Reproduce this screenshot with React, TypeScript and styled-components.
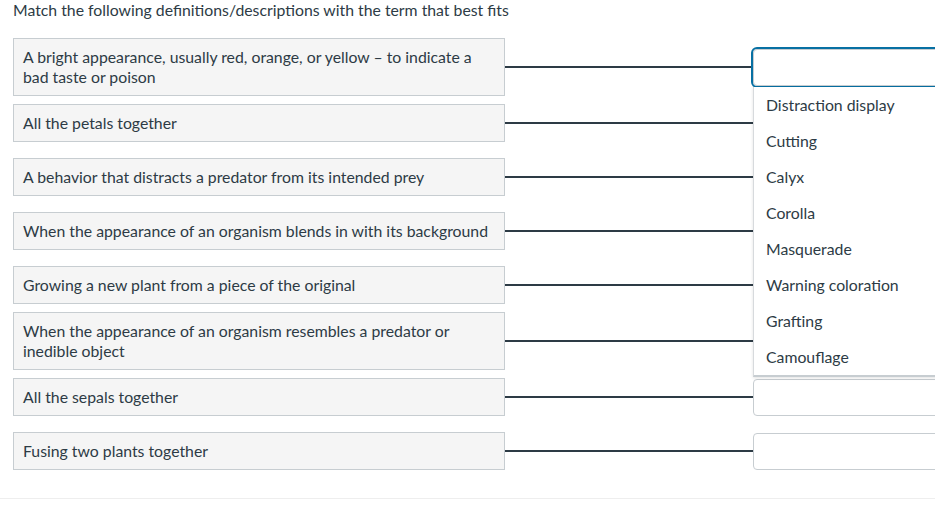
import styled, { createGlobalStyle } from 'styled-components';

const GlobalStyle = createGlobalStyle`
  html, body {
    margin: 0;
    padding: 0;
    background: #ffffff;
    overflow: hidden;
  }
  body {
    font-family: Lato, 'Open Sans', 'Liberation Sans', sans-serif;
    color: #2d3b45;
  }
`;

const Page = styled.div`
  width: 935px;
  height: 512px;
  position: relative;
  overflow: hidden;
`;

const Question = styled.div`
  padding-left: 13px;
  padding-bottom: 28px;
  border-bottom: 1px solid #eeeeee;
`;

const Title = styled.div`
  font-size: 15.8px;
  line-height: 20px;
  margin-bottom: 18px;
  white-space: nowrap;
`;

const AnswerList = styled.div`
  display: flex;
  flex-direction: column;
  position: relative;
`;

const AnswerRow = styled.div<{ $gap: number }>`
  display: flex;
  align-items: center;
  margin-bottom: ${(p) => p.$gap}px;
  &:last-child {
    margin-bottom: 0;
  }
`;

const Prompt = styled.div`
  box-sizing: border-box;
  width: 492px;
  flex-shrink: 0;
  background: #f5f5f5;
  border: 1px solid #c7cdd1;
  padding: 8px 9px;
  font-size: 15.8px;
  line-height: 20px;
`;

const Connector = styled.div`
  width: 248px;
  height: 2px;
  background: #2d3b45;
  flex-shrink: 0;
`;

const SelectWrap = styled.div`
  position: relative;
  flex-shrink: 0;
`;

const SelectBox = styled.div<{ $focused?: boolean }>`
  box-sizing: border-box;
  width: 220px;
  height: 37px;
  background: #ffffff;
  border: 1px solid #c7cdd1;
  border-radius: 4px;
  outline: ${(p) => (p.$focused ? '2px solid #0770a3' : 'none')};
`;

const Dropdown = styled.ul`
  position: absolute;
  top: 38px;
  left: 0;
  z-index: 10;
  box-sizing: border-box;
  width: 220px;
  margin: 0;
  padding: 0;
  list-style: none;
  background: #ffffff;
  border-left: 1px solid #d7dadd;
  border-bottom: 2px solid #c7cdd1;
  box-shadow: 0 1px 3px rgba(0, 0, 0, 0.12);
`;

const Option = styled.li`
  height: 36px;
  line-height: 36px;
  padding-left: 12px;
  font-size: 15.8px;
  color: #2d3b45;
  white-space: nowrap;
`;

const prompts = [
  { text: 'A bright appearance, usually red, orange, or yellow \u2013 to indicate a bad taste or poison', gap: 8 },
  { text: 'All the petals together', gap: 16 },
  { text: 'A behavior that distracts a predator from its intended prey', gap: 16 },
  { text: 'When the appearance of an organism blends in with its background', gap: 16 },
  { text: 'Growing a new plant from a piece of the original', gap: 8 },
  { text: 'When the appearance of an organism resembles a predator or inedible object', gap: 8 },
  { text: 'All the sepals together', gap: 16 },
  { text: 'Fusing two plants together', gap: 0 },
];

const options = [
  'Distraction display',
  'Cutting',
  'Calyx',
  'Corolla',
  'Masquerade',
  'Warning coloration',
  'Grafting',
  'Camouflage',
];

const App = () => {
  return (
    <Page>
      <GlobalStyle />
      <Question>
        <Title>Match the following definitions/descriptions with the term that best fits</Title>
        <AnswerList>
          {prompts.map((p, i) => (
            <AnswerRow key={i} $gap={p.gap}>
              <Prompt>{p.text}</Prompt>
              <Connector />
              <SelectWrap>
                <SelectBox $focused={i === 0} />
                {i === 0 && (
                  <Dropdown>
                    {options.map((o) => (
                      <Option key={o}>{o}</Option>
                    ))}
                  </Dropdown>
                )}
              </SelectWrap>
            </AnswerRow>
          ))}
        </AnswerList>
      </Question>
    </Page>
  );
};

export default App;
